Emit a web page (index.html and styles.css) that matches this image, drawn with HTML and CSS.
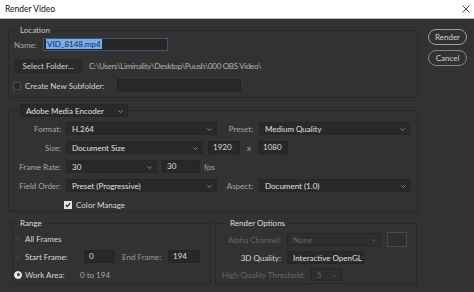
FILE: index.html
```html
<!DOCTYPE html>
<html lang="en">
<head>
    <meta charset="UTF-8">
    <title>Render Video</title>
    <link rel="stylesheet" href="styles.css">
</head>
<body>
    <div class="dialog">
        <div class="titlebar">
            <span class="title">Render Video</span>
            <svg class="close" width="8" height="8" viewBox="0 0 8 8">
                <path d="M0.5 0.5 L7.5 7.5 M7.5 0.5 L0.5 7.5" stroke="#333" stroke-width="0.9" fill="none"/>
            </svg>
        </div>

        <div class="content">
            <div class="main">
                <!-- Location -->
                <fieldset class="group location">
                    <legend class="group-title">Location</legend>
                    <div class="row name-row">
                        <span class="lbl name-lbl">Name:</span>
                        <div class="text-input focused"><span class="selected">VID_8148.mp4</span></div>
                    </div>
                    <div class="row folder-row">
                        <div class="btn">Select Folder...</div>
                        <span class="path">C:\Users\Liminality\Desktop\Puush\000 OBS Video\</span>
                    </div>
                    <div class="row subfolder-row">
                        <span class="check"></span>
                        <span class="lbl subfolder-lbl">Create New Subfolder:</span>
                        <div class="text-input subfolder-input"></div>
                    </div>
                </fieldset>

                <!-- Video settings -->
                <fieldset class="group video">
                    <legend class="group-select">
                        <div class="select legend-select">
                            <span>Adobe Media Encoder</span>
                            <svg class="arrow" width="5" height="3" viewBox="0 0 5 3"><path d="M0.5 0.5 L2.5 2.5 L4.5 0.5" stroke="#8a8a8a" fill="none"/></svg>
                        </div>
                    </legend>
                    <div class="row">
                        <span class="lbl col-lbl">Format:</span>
                        <div class="select w151">
                            <span>H.264</span>
                            <svg class="arrow" width="5" height="3" viewBox="0 0 5 3"><path d="M0.5 0.5 L2.5 2.5 L4.5 0.5" stroke="#8a8a8a" fill="none"/></svg>
                        </div>
                        <span class="lbl side-lbl">Preset:</span>
                        <div class="select w151 side-select">
                            <span>Medium Quality</span>
                            <svg class="arrow" width="5" height="3" viewBox="0 0 5 3"><path d="M0.5 0.5 L2.5 2.5 L4.5 0.5" stroke="#8a8a8a" fill="none"/></svg>
                        </div>
                    </div>
                    <div class="row gap">
                        <span class="lbl col-lbl">Size:</span>
                        <div class="select w137">
                            <span>Document Size</span>
                            <svg class="arrow" width="5" height="3" viewBox="0 0 5 3"><path d="M0.5 0.5 L2.5 2.5 L4.5 0.5" stroke="#8a8a8a" fill="none"/></svg>
                        </div>
                        <div class="text-input num w32">1920</div>
                        <span class="times">x</span>
                        <div class="text-input num w30">1080</div>
                    </div>
                    <div class="row gap">
                        <span class="lbl col-lbl">Frame Rate:</span>
                        <div class="select w91">
                            <span>30</span>
                            <svg class="arrow" width="5" height="3" viewBox="0 0 5 3"><path d="M0.5 0.5 L2.5 2.5 L4.5 0.5" stroke="#8a8a8a" fill="none"/></svg>
                        </div>
                        <div class="text-input num w38">30</div>
                        <span class="lbl fps">fps</span>
                    </div>
                    <div class="row gap">
                        <span class="lbl col-lbl">Field Order:</span>
                        <div class="select w151">
                            <span>Preset (Progressive)</span>
                            <svg class="arrow" width="5" height="3" viewBox="0 0 5 3"><path d="M0.5 0.5 L2.5 2.5 L4.5 0.5" stroke="#8a8a8a" fill="none"/></svg>
                        </div>
                        <span class="lbl side-lbl">Aspect:</span>
                        <div class="select w152 side-select">
                            <span>Document (1.0)</span>
                            <svg class="arrow" width="5" height="3" viewBox="0 0 5 3"><path d="M0.5 0.5 L2.5 2.5 L4.5 0.5" stroke="#8a8a8a" fill="none"/></svg>
                        </div>
                    </div>
                    <div class="row color-row">
                        <span class="check checked">
                            <svg width="6" height="6" viewBox="0 0 6 6"><path d="M0.8 3 L2.4 4.6 L5.2 1.2" stroke="#2a2a2a" stroke-width="1.3" fill="none"/></svg>
                        </span>
                        <span class="value color-lbl">Color Manage</span>
                    </div>
                </fieldset>

                <div class="lower">
                    <!-- Range -->
                    <fieldset class="group range">
                        <legend class="group-title bright">Range</legend>
                        <div class="row">
                            <span class="radio"></span>
                            <span class="value radio-lbl">All Frames</span>
                        </div>
                        <div class="row gap-r">
                            <span class="radio"></span>
                            <span class="value radio-lbl start-lbl">Start Frame:</span>
                            <div class="text-input num w31">0</div>
                            <span class="lbl end-lbl">End Frame:</span>
                            <div class="text-input num w32">194</div>
                        </div>
                        <div class="row gap-r">
                            <span class="radio on"></span>
                            <span class="value radio-lbl work-lbl">Work Area:</span>
                            <span class="lbl">0 to 194</span>
                        </div>
                    </fieldset>

                    <!-- Render Options -->
                    <fieldset class="group render-opts">
                        <legend class="group-title bright">Render Options</legend>
                        <div class="row alpha-row">
                            <span class="lbl ro-lbl disabled">Alpha Channel:</span>
                            <div class="select w94 off">
                                <span>None</span>
                                <svg class="arrow" width="5" height="3" viewBox="0 0 5 3"><path d="M0.5 0.5 L2.5 2.5 L4.5 0.5" stroke="#555" fill="none"/></svg>
                            </div>
                            <span class="swatch"></span>
                        </div>
                        <div class="row gap-o">
                            <span class="value ro-lbl">3D Quality:</span>
                            <div class="select w77">
                                <span>Interactive OpenGL</span>
                                <svg class="arrow" width="5" height="3" viewBox="0 0 5 3"><path d="M0.5 0.5 L2.5 2.5 L4.5 0.5" stroke="#8a8a8a" fill="none"/></svg>
                            </div>
                        </div>
                        <div class="row gap-o">
                            <span class="lbl hq-lbl disabled">High Quality Threshold:</span>
                            <div class="select w31 off">
                                <span>5</span>
                                <svg class="arrow" width="5" height="3" viewBox="0 0 5 3"><path d="M0.5 0.5 L2.5 2.5 L4.5 0.5" stroke="#555" fill="none"/></svg>
                            </div>
                        </div>
                    </fieldset>
                </div>
            </div>

            <div class="actions">
                <div class="pill-btn primary">Render</div>
                <div class="pill-btn">Cancel</div>
            </div>
        </div>
    </div>
</body>
</html>
```

FILE: styles.css
```css
* {
    margin: 0;
    padding: 0;
    box-sizing: border-box;
}

body {
    margin: 0;
    background: #323232;
    font-family: 'Lato', 'Noto Sans', sans-serif;
    font-size: 8px;
    color: #b8b8b8;
}

.dialog {
    width: 474px;
    height: 292px;
    background: #323232;
    overflow: hidden;
}

.titlebar {
    height: 19px;
    background: #ffffff;
    border-bottom: 1px solid #bcbcbc;
    display: flex;
    align-items: center;
    justify-content: space-between;
    padding: 0 4px 0 5px;
}

.title {
    color: #111;
    font-size: 8.5px;
}

.content {
    display: flex;
    padding-left: 8px;
}

.main {
    width: 410px;
}

/* group boxes */
.group {
    border: 1px solid #272727;
    min-width: 0;
    margin: 0;
}

.group-title {
    line-height: 12px;
    padding: 0 3px;
    margin-left: 3px;
    color: #c8c8c8;
}

.group-title.bright {
    color: #dedede;
}

.row {
    display: flex;
    align-items: center;
    height: 13px;
}

.lbl {
    color: #a8a8a8;
    white-space: nowrap;
}

.value {
    color: #d8d8d8;
    white-space: nowrap;
}

.disabled {
    color: #686868;
}

.text-input {
    height: 13px;
    background: #282828;
    border: 1px solid #232323;
    line-height: 11px;
    padding-left: 4px;
    color: #dedede;
}

.select {
    height: 13px;
    background: #292929;
    border: 1px solid #262626;
    display: flex;
    align-items: center;
    justify-content: space-between;
    padding: 0 4px 0 5px;
    color: #e0e0e0;
    white-space: nowrap;
    overflow: hidden;
}

.select.off {
    background: #2e2e2e;
    color: #666;
}

.arrow {
    flex-shrink: 0;
    margin-top: 1px;
}

.check {
    width: 8px;
    height: 8px;
    background: #2a2a2a;
    border: 1px solid #4a4a4a;
    flex-shrink: 0;
    display: flex;
    align-items: center;
    justify-content: center;
}

.check.checked {
    background: #e4e4e4;
    border-color: #e4e4e4;
}

/* location */
.location {
    margin-top: 5px;
    padding: 2px 0 5px 5px;
}

.name-lbl {
    width: 29px;
}

.focused {
    width: 125px;
    border-color: #3e5675;
    background: #262626;
    padding-left: 2px;
}

.selected {
    background: #79aeee;
    color: #0d2b57;
    padding: 0 1px;
    display: inline-block;
    line-height: 10px;
}

.folder-row {
    margin-top: 8px;
    height: 14px;
}

.btn {
    width: 68px;
    height: 14px;
    background: #2b2b2b;
    border: 1px solid #282828;
    display: flex;
    align-items: center;
    justify-content: center;
    color: #d4d4d4;
}

.path {
    margin-left: 7px;
    color: #b4b4b4;
    white-space: nowrap;
    letter-spacing: -0.3px;
}

.subfolder-row {
    margin-top: 6px;
}

.subfolder-row .check {
    margin-left: -1px;
}

.subfolder-lbl {
    width: 92px;
    margin-left: 4px;
    color: #d0d0d0;
}

.subfolder-input {
    width: 124px;
}

/* video */
.video {
    margin-top: 6px;
    padding: 5px 0 2px 0;
}

.group-select {
    margin-left: 11px;
    padding: 0;
}

.legend-select {
    width: 108px;
}

.row.gap {
    margin-top: 6px;
}

.col-lbl {
    width: 52px;
    text-align: right;
    margin-right: 5px;
}

.side-lbl {
    width: 36px;
    text-align: right;
    margin-right: 6px;
}

.w151 { width: 151px; }
.w152 { width: 152px; }
.w137 { width: 137px; }
.w91 { width: 91px; }
.w94 { width: 94px; }
.w77 { width: 77px; }
.w38 { width: 38px; }
.w32 { width: 32px; }
.w31 { width: 31px; }
.w30 { width: 30px; }

.num {
    margin-left: 5px;
}

.times {
    width: 18px;
    text-align: center;
    color: #a8a8a8;
}

.times + .num {
    margin-left: 0;
}

.fps {
    margin-left: 4px;
}

.color-row {
    margin-top: 8px;
    height: 9px;
}

.color-row .check {
    margin-left: 55px;
}

.color-lbl {
    margin-left: 4px;
}

/* lower groups */
.lower {
    display: flex;
    margin-top: 5px;
}

.range {
    width: 199px;
    margin-left: 4px;
    padding: 3px 0 2px 1px;
}

.row.gap-r {
    margin-top: 5px;
}

.radio {
    width: 8px;
    height: 8px;
    border-radius: 50%;
    background: #3a3a3a;
    border: 1px solid #2e2e2e;
    flex-shrink: 0;
    display: flex;
    align-items: center;
    justify-content: center;
}

.radio.on {
    background: #e8e8e8;
    border-color: #e8e8e8;
}

.radio.on::after {
    content: '';
    width: 3px;
    height: 3px;
    border-radius: 50%;
    background: #3a3a3a;
}

.radio-lbl {
    margin-left: 3px;
}

.start-lbl {
    width: 59px;
}

.range .num {
    margin-left: 0;
}

.end-lbl {
    width: 46px;
    margin-left: 7px;
    color: #9a9a9a;
}

.work-lbl {
    width: 55px;
}

.render-opts {
    width: 202px;
    margin-left: 4px;
    padding: 3px 0 2px 6px;
}

.render-opts .group-title {
    margin-left: 5px;
}

.alpha-row {
    height: 15px;
}

.ro-lbl {
    width: 59px;
    text-align: right;
    margin-right: 6px;
}

.swatch {
    width: 20px;
    height: 15px;
    margin-left: 6px;
    border: 1px solid #4a4a4a;
    background: #2f2f2f;
}

.row.gap-o {
    margin-top: 4px;
}

.hq-lbl {
    width: 89px;
}

/* buttons */
.actions {
    margin-left: 10px;
    margin-top: 10px;
    display: flex;
    flex-direction: column;
    gap: 5px;
}

.pill-btn {
    width: 39px;
    height: 16px;
    border: 1px solid #858585;
    border-radius: 8px;
    display: flex;
    align-items: center;
    justify-content: center;
    color: #d0d0d0;
}

.pill-btn.primary {
    border-color: #a0a0a0;
}
```
